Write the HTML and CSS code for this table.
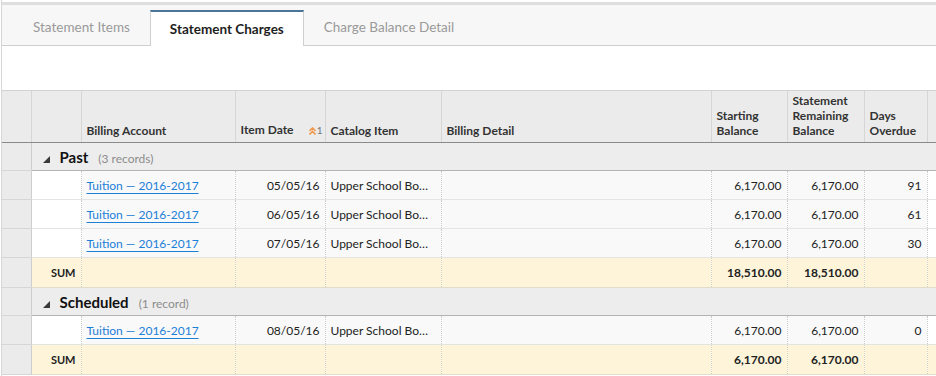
FILE: index.html
```html
<!DOCTYPE html>
<html lang="en">
<head>
  <meta charset="UTF-8">
  <title>Statement Charges</title>
  <link rel="stylesheet" href="styles.css">
</head>
<body>
  <div class="page">
    <nav class="tabs">
      <div class="tab">Statement Items</div>
      <div class="tab active">Statement Charges</div>
      <div class="tab">Charge Balance Detail</div>
    </nav>

    <div class="toolbar"></div>

    <!-- charges grid -->
    <div class="grid-wrap">
      <table class="grid">
        <colgroup>
          <col class="c-sel">
          <col class="c-lbl">
          <col class="c-acct">
          <col class="c-date">
          <col class="c-cat">
          <col class="c-detail">
          <col class="c-num">
          <col class="c-num2">
          <col class="c-days">
          <col class="c-more">
        </colgroup>
        <thead>
          <tr>
            <th></th>
            <th></th>
            <th>Billing Account</th>
            <th>Item Date
              <span class="sort">
                <svg width="7" height="8" viewBox="0 0 7 8"><path d="M0.5 4 L3.5 1 L6.5 4 M0.5 7.5 L3.5 4.5 L6.5 7.5" fill="none" stroke="#f19a4f" stroke-width="1.6"/></svg><span class="sort-n">1</span>
              </span>
            </th>
            <th>Catalog Item</th>
            <th>Billing Detail</th>
            <th>Starting<br>Balance</th>
            <th>Statement<br>Remaining<br>Balance</th>
            <th>Days<br>Overdue</th>
            <th></th>
          </tr>
        </thead>
        <tbody>
          <tr class="group">
            <td class="sel"></td>
            <td colspan="9"><span class="caret"></span><span class="group-name">Past</span><span class="group-count">(3 records)</span></td>
          </tr>
          <tr class="row">
            <td class="sel"></td>
            <td class="lbl"></td>
            <td><a href="#">Tuition — 2016-2017</a></td>
            <td class="num">05/05/16</td>
            <td>Upper School Bo…</td>
            <td></td>
            <td class="num">6,170.00</td>
            <td class="num">6,170.00</td>
            <td class="num">91</td>
            <td class="more"></td>
          </tr>
          <tr class="row">
            <td class="sel"></td>
            <td class="lbl"></td>
            <td><a href="#">Tuition — 2016-2017</a></td>
            <td class="num">06/05/16</td>
            <td>Upper School Bo…</td>
            <td></td>
            <td class="num">6,170.00</td>
            <td class="num">6,170.00</td>
            <td class="num">61</td>
            <td class="more"></td>
          </tr>
          <tr class="row">
            <td class="sel"></td>
            <td class="lbl"></td>
            <td><a href="#">Tuition — 2016-2017</a></td>
            <td class="num">07/05/16</td>
            <td>Upper School Bo…</td>
            <td></td>
            <td class="num">6,170.00</td>
            <td class="num">6,170.00</td>
            <td class="num">30</td>
            <td class="more"></td>
          </tr>
          <tr class="sum">
            <td class="sel"></td>
            <td class="lbl">SUM</td>
            <td></td>
            <td></td>
            <td></td>
            <td></td>
            <td class="num">18,510.00</td>
            <td class="num">18,510.00</td>
            <td></td>
            <td></td>
          </tr>

          <tr class="group">
            <td class="sel"></td>
            <td colspan="9"><span class="caret"></span><span class="group-name">Scheduled</span><span class="group-count">(1 record)</span></td>
          </tr>
          <tr class="row">
            <td class="sel"></td>
            <td class="lbl"></td>
            <td><a href="#">Tuition — 2016-2017</a></td>
            <td class="num">08/05/16</td>
            <td>Upper School Bo…</td>
            <td></td>
            <td class="num">6,170.00</td>
            <td class="num">6,170.00</td>
            <td class="num">0</td>
            <td class="more"></td>
          </tr>
          <tr class="sum">
            <td class="sel"></td>
            <td class="lbl">SUM</td>
            <td></td>
            <td></td>
            <td></td>
            <td></td>
            <td class="num">6,170.00</td>
            <td class="num">6,170.00</td>
            <td></td>
            <td></td>
          </tr>
        </tbody>
      </table>
    </div>
  </div>
</body>
</html>
```

FILE: styles.css
```css
body {
  margin: 0;
  font-family: Lato, 'Liberation Sans', sans-serif;
  color: #222;
  background: #fff;
}

.page {
  margin-left: 1px;
  padding-top: 2px;
  border-left: 1px solid #d6d6d6;
  height: 374px;
  overflow: hidden;
}

/* tabs */
.tabs {
  display: flex;
  align-items: flex-end;
  height: 40px;
  padding-left: 11px;
  border-top: 3px solid #dedede;
  border-bottom: 1px solid #cfcfcf;
  background: #f7f7f7;
}

.tab {
  height: 35px;
  line-height: 35px;
  padding: 0 20px;
  font-size: 13.5px;
  color: #9a9a9a;
  white-space: nowrap;
}

.tab.active {
  height: 34px;
  line-height: 34px;
  padding: 0 19px;
  margin-bottom: -1px;
  background: #fff;
  border: 1px solid #cfcfcf;
  border-top: 2px solid #4a7599;
  border-bottom: none;
  color: #1e1e1e;
  font-weight: 700;
}

.toolbar {
  height: 44px;
}

/* grid */
.grid-wrap {
  border-top: 1px solid #d2d2d2;
  overflow: hidden;
}

.grid {
  border-collapse: collapse;
  table-layout: fixed;
  width: 996px;
  font-size: 12px;
}

.c-sel { width: 29px; }
.c-lbl { width: 50px; }
.c-acct { width: 154px; }
.c-date { width: 90px; }
.c-cat { width: 116px; }
.c-detail { width: 270px; }
.c-num { width: 76px; }
.c-num2 { width: 77px; }
.c-days { width: 63px; }
.c-more { width: 71px; }

.grid th {
  height: 47px;
  padding: 0 5px 4px;
  vertical-align: bottom;
  text-align: left;
  font-weight: 700;
  line-height: 15px;
  color: #333;
  background: #ebebeb;
  border-right: 1px solid #d6d6d6;
  border-bottom: 1px solid #8a8a8a;
  white-space: nowrap;
}

.sort {
  float: right;
  margin-right: -3px;
}

.sort svg {
  vertical-align: -1px;
}

.sort-n {
  margin-left: 1px;
  font-size: 10px;
  font-weight: 400;
  color: #777;
}

.grid td {
  padding: 0 5px;
  white-space: nowrap;
  overflow: hidden;
}

.grid td.sel {
  padding: 0;
  background: #ebebeb;
  border-right: 1px solid #cdcdcd;
  border-bottom: 1px solid #d6d6d6;
}

.group td {
  height: 27px;
  background: #ededed;
  border-bottom: 1px solid #b4b4b4;
}

.caret {
  display: inline-block;
  width: 0;
  height: 0;
  margin: 0 10px 0 6px;
  border-left: 7px solid transparent;
  border-bottom: 7px solid #3a3a3a;
}

.group-name {
  font-size: 15px;
  font-weight: 700;
  color: #111;
}

.group-count {
  margin-left: 10px;
  font-size: 12px;
  color: #8c8c8c;
}

.row td {
  height: 28px;
  background: #f9f9f9;
  border-right: 1px dotted #cbcbcb;
  border-bottom: 1px solid #e4e4e4;
}

.row td.lbl {
  background: #fff;
}

.row td.more {
  background: #fff;
}

.num {
  text-align: right;
}

.row a {
  color: #1b80d8;
  text-decoration: underline;
  text-underline-offset: 3px;
}

.sum td {
  height: 29px;
  background: #fdf4da;
  border-right: 1px dotted #d8cfb4;
  border-bottom: 1px solid #e2dccb;
  font-weight: 700;
}

.sum td.lbl {
  text-align: right;
  font-size: 11px;
}
```
